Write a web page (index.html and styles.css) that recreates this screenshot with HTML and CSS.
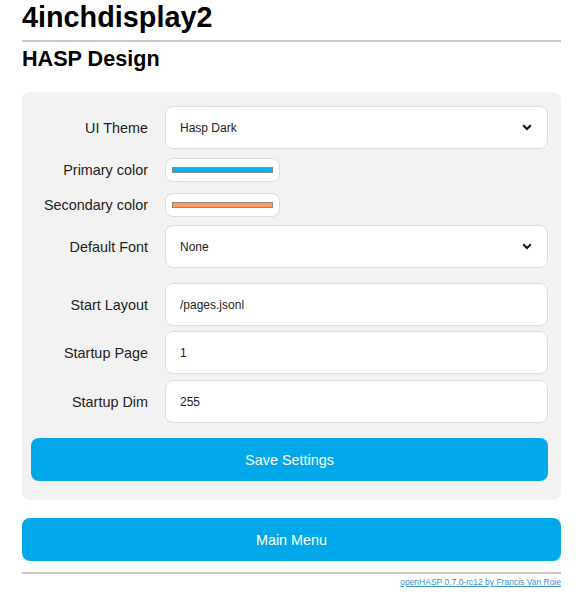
FILE: index.html
```html
<!DOCTYPE html>
<html>
<head>
<meta charset="utf-8">
<title>HASP Design</title>
<link rel="stylesheet" href="styles.css">
</head>
<body>
<div class="page">
  <h1 class="title">4inchdisplay2</h1>
  <hr class="rule">
  <h2 class="subtitle">HASP Design</h2>
  <form class="panel">
    <div class="row row-theme">
      <label class="label">UI Theme</label>
      <div class="field select">
        <span>Hasp Dark</span>
        <svg class="chev" width="10" height="7" viewBox="0 0 10 7"><path d="M1.2 1.3 L5 5 L8.8 1.3" fill="none" stroke="#111" stroke-width="2"/></svg>
      </div>
    </div>
    <div class="row row-primary">
      <label class="label">Primary color</label>
      <div class="color"><span class="swatch swatch-blue"></span></div>
    </div>
    <div class="row row-secondary">
      <label class="label">Secondary color</label>
      <div class="color"><span class="swatch swatch-orange"></span></div>
    </div>
    <div class="row row-font">
      <label class="label">Default Font</label>
      <div class="field select">
        <span>None</span>
        <svg class="chev" width="10" height="7" viewBox="0 0 10 7"><path d="M1.2 1.3 L5 5 L8.8 1.3" fill="none" stroke="#111" stroke-width="2"/></svg>
      </div>
    </div>
    <div class="row row-layout">
      <label class="label">Start Layout</label>
      <div class="field"><span>/pages.jsonl</span></div>
    </div>
    <div class="row row-page">
      <label class="label">Startup Page</label>
      <div class="field"><span>1</span></div>
    </div>
    <div class="row row-dim">
      <label class="label">Startup Dim</label>
      <div class="field"><span>255</span></div>
    </div>
    <div class="btn btn-save">Save Settings</div>
  </form>
  <div class="btn btn-main">Main Menu</div>
  <hr class="rule rule-foot">
  <div class="footer"><a href="#">openHASP 0.7.0-rc12 by Francis Van Roie</a></div>
</div>
</body>
</html>
```
FILE: styles.css
```css
html, body {
  margin: 0;
  padding: 0;
  background: #fff;
}
body {
  font-family: "Liberation Sans", Arial, sans-serif;
  color: #222;
}
.page {
  width: 539px;
  margin-left: 22px;
}
.title {
  font-size: 28.8px;
  line-height: 33px;
  font-weight: bold;
  color: #000;
  margin: 1px 0 0;
}
.rule {
  border: 0;
  height: 2px;
  background: #c8c8c8;
  margin: 6px 0 0;
}
.subtitle {
  font-size: 21.6px;
  line-height: 25px;
  font-weight: bold;
  color: #000;
  margin: 4px 0 21px;
}
.panel {
  background: #f2f2f2;
  border-radius: 8px;
  padding: 14px 13px 19px 9px;
  margin: 0;
}
.row {
  display: grid;
  grid-template-columns: 117px 1fr;
  column-gap: 17px;
  align-items: center;
}
.label {
  text-align: right;
  font-size: 14.4px;
  color: #222;
}
.field {
  height: 43px;
  box-sizing: border-box;
  background: #fff;
  border: 1px solid #dcdcdc;
  border-radius: 8px;
  display: flex;
  align-items: center;
  justify-content: space-between;
  padding: 0 15px 0 14px;
  font-size: 12px;
  color: #222;
}
.chev {
  display: block;
}
.color {
  width: 115px;
  height: 24px;
  box-sizing: border-box;
  background: #fff;
  border: 1px solid #dcdcdc;
  border-radius: 8px;
  display: flex;
  align-items: center;
  padding: 0 6px;
}
.swatch {
  display: block;
  width: 101px;
  height: 6px;
  box-sizing: border-box;
  border: 1px solid #8a8a8a;
}
.swatch-blue { background: #00b4f1; }
.swatch-orange { background: #ff9a5e; }
.row-primary { margin-top: 9px; }
.row-secondary { margin-top: 11px; }
.row-font { margin-top: 8px; }
.row-layout { margin-top: 15px; }
.row-page { margin-top: 5px; }
.row-dim { margin-top: 6px; }
.btn {
  height: 43px;
  border-radius: 8px;
  background: #03a8eb;
  color: #fff;
  font-size: 14.4px;
  display: flex;
  align-items: center;
  justify-content: center;
}
.btn-save {
  margin-top: 15px;
}
.btn-main {
  margin-top: 18px;
}
.rule-foot {
  margin-top: 11px;
}
.footer {
  text-align: right;
  font-size: 8.5px;
  line-height: 10px;
  margin-top: 3px;
}
.footer a {
  color: #3d8fd6;
  text-decoration: underline;
}
```
